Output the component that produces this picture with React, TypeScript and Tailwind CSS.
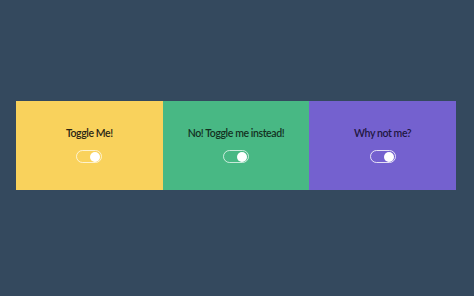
import React from "react";

const panels = [
  { label: "Toggle Me!", bg: "bg-[#f9d25c]", text: "text-[#2a2414]", ring: "border-white/70" },
  { label: "No! Toggle me instead!", bg: "bg-[#48b884]", text: "text-[#13301f]", ring: "border-white/70" },
  { label: "Why not me?", bg: "bg-[#7461cf]", text: "text-[#1d1640]", ring: "border-white/80" },
];

export default function App() {
  return (
    <div className="w-[474px] h-[296px] bg-[#34495e] pt-[101px] pl-[16px]" style={{ fontFamily: "Lato, 'Open Sans', sans-serif" }}>
      <div className="grid grid-cols-3 w-[440px] h-[89px]">
        {panels.map((p) => (
          <div key={p.label} className={`${p.bg} flex flex-col items-center pt-[25px]`}>
            <div className={`${p.text} text-[10.5px] leading-[14px] font-semibold tracking-[-0.4px]`}>{p.label}</div>
            <div className={`mt-[10px] w-[26px] h-[13px] rounded-full border ${p.ring} flex items-center justify-end pr-[1px]`}>
              <div className="w-[10px] h-[10px] rounded-full bg-white" />
            </div>
          </div>
        ))}
      </div>
    </div>
  );
}
